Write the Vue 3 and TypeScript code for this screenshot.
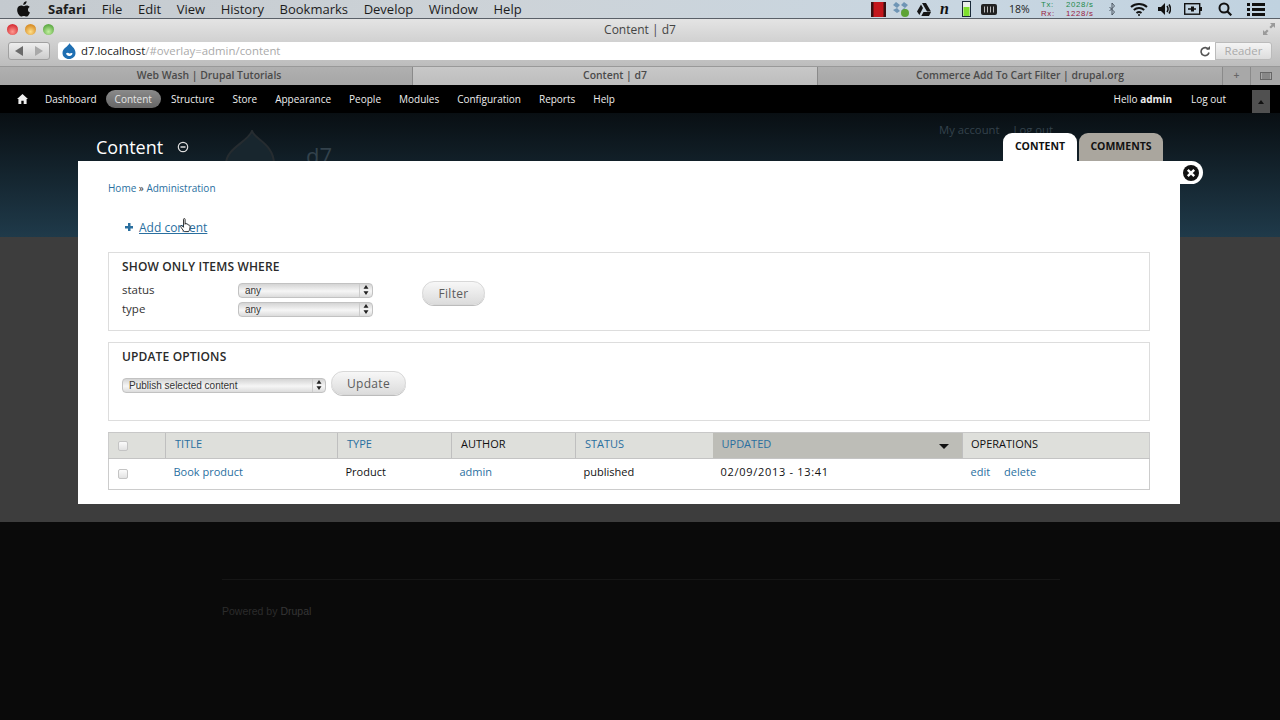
<script setup lang="ts">
const menus: string[] = ['File', 'Edit', 'View', 'History', 'Bookmarks', 'Develop', 'Window', 'Help']
const adminLinks: string[] = ['Structure', 'Store', 'Appearance', 'People', 'Modules', 'Configuration', 'Reports', 'Help']
const tabs: { label: string; active?: boolean }[] = [
  { label: 'Web Wash | Drupal Tutorials' },
  { label: 'Content | d7', active: true },
  { label: 'Commerce Add To Cart Filter | drupal.org' },
]
const columns: { label: string; link?: boolean; sorted?: boolean }[] = [
  { label: 'TITLE', link: true },
  { label: 'TYPE', link: true },
  { label: 'AUTHOR' },
  { label: 'STATUS', link: true },
  { label: 'UPDATED', link: true, sorted: true },
  { label: 'OPERATIONS' },
]
const filters: string[] = ['status', 'type']
</script>

<template>
  <div class="page">
    <header class="menubar">
      <svg class="apple" viewBox="0 0 16 18" width="14" height="16">
        <path fill="#111" d="M11 0c.1 1.200-.4 2.300-1 3-.7.800-1.700 1.400-2.800 1.300C7.100 3.200 7.600 2 8.200 1.300 8.900.6 10.100.1 11 0zM14.800 13c-.4 1-.6 1.400-1.100 2.200-.7 1.100-1.700 2.500-3 2.500-1.100 0-1.400-.7-2.900-.7s-1.900.7-3 .7c-1.300 0-2.200-1.300-2.900-2.300C0 12.600-.3 9 1 7.100c.9-1.300 2.300-2.100 3.600-2.100 1.400 0 2.200.8 3.300.8s1.700-.8 3.300-.8c1.200 0 2.400.6 3.300 1.700-2.900 1.600-2.400 5.700.3 6.300z" />
      </svg>
      <strong class="app-name">Safari</strong>
      <nav class="menus"><span v-for="m in menus" :key="m">{{ m }}</span></nav>
      <div class="status">
        <svg class="st film" viewBox="0 0 15 15" width="15" height="15"><rect width="15" height="15" fill="#c3161c" /><rect width="2.500" height="15" fill="#3a1113" /><rect x="12.500" width="2.500" height="15" fill="#3a1113" /></svg>
        <svg class="st drop" viewBox="0 0 18 16" width="18" height="16"><path fill="#6f95b5" d="M4 1l4 3-3 3-4-3zM12 1l4 3-3 3-4-3zM5 7l3 3-3 2-4-3zM12 7l3 2-3 3-3-2z" /><circle cx="13" cy="12" r="4" fill="#5da335" /></svg>
        <svg class="st drive" viewBox="0 0 14 13" width="14" height="13"><path fill="#151515" d="M5 0h4l5 8.500h-4zM4 1.500l2 3.500-3.600 7L0 8.500zM6.500 9H14l-2 4H4.300z" /></svg>
        <span class="st en">n</span>
        <svg class="st cell" viewBox="0 0 9 16" width="9" height="16"><rect x=".5" y=".5" width="8" height="15" fill="#e8f0e8" stroke="#1a2a3a" /><rect x="1.500" y="6" width="6" height="9" fill="#7ee02f" /></svg>
        <svg class="st mem" viewBox="0 0 16 11" width="16" height="11"><rect width="16" height="11" rx="2" fill="#222" /><path stroke="#bbb" d="M3.500 2.500v6M6.500 2.500v6M9.500 2.500v6M12.500 2.500v6" /></svg>
        <span class="st pct">18%</span>
        <span class="st net-labels"><i class="tx">Tx:</i><i class="rx">Rx:</i></span>
        <span class="st net-values"><i class="tx">2028/s</i><i class="rx">1228/s</i></span>
        <svg class="st blue" viewBox="0 0 12 14" width="12" height="14"><path fill="none" stroke="#4a5560" d="M6 1v12M6 1l2.500 3L3.500 9M6 13l2.500-3L3.500 5" /></svg>
        <svg class="st wifi" viewBox="0 0 18 14" width="18" height="14"><path fill="none" stroke="#111" stroke-width="2" d="M1 5c4.500-4 11.500-4 16 0M3.800 8c3-2.600 7.400-2.600 10.400 0M6.500 11c1.500-1.200 3.500-1.200 5 0" /><circle cx="9" cy="13" r="1" fill="#111" /></svg>
        <svg class="st vol" viewBox="0 0 13 12" width="13" height="12"><path fill="#111" d="M0 4h3l4-4v12L3 8H0z" /><path fill="none" stroke="#111" stroke-width="1.500" d="M9 3c1.400 2 1.400 4 0 6M11 1.500c2 3 2 6 0 9" /></svg>
        <svg class="st plug" viewBox="0 0 18 12" width="18" height="12"><rect x=".7" y=".7" width="15" height="10.500" fill="none" stroke="#111" stroke-width="1.400" /><rect x="16" y="4" width="2" height="4" fill="#111" /><path fill="#111" d="M4 5.300h3V3.500h3v1.800h2v1.400h-2v1.800H7V6.700H4z" /></svg>
        <svg class="st search" viewBox="0 0 14 14" width="14" height="14"><circle cx="6" cy="6" r="4.500" fill="none" stroke="#111" stroke-width="2" /><path stroke="#111" stroke-width="2.200" d="M9 9l4.300 4.300" /></svg>
        <svg class="st list" viewBox="0 0 18 13" width="18" height="13"><path fill="#111" d="M0 0h3v3H0zM5 0h13v3H5zM0 5h3v3H0zM5 5h13v3H5zM0 10h3v3H0zM5 10h13v3H5z" /></svg>
      </div>
    </header>

    <section class="chrome">
      <div class="titlebar">
        <div class="lights"><i class="red"></i><i class="amber"></i><i class="green"></i></div>
        <span class="win-title">Content | d7</span>
        <svg class="fullscreen" viewBox="0 0 12 12" width="12" height="12"><path fill="#9a9a9a" d="M12 0v5l-1.700-1.700L8 5.600 6.400 4l2.300-2.300L7 0zM0 12V7l1.700 1.700L4 6.400 5.600 8 3.300 10.300 5 12z" /></svg>
      </div>
      <div class="addressbar">
        <div class="history">
          <span><svg viewBox="0 0 8 10" width="8" height="10"><path fill="#6a6a6a" d="M8 0v10L0 5z" /></svg></span>
          <span><svg viewBox="0 0 8 10" width="8" height="10"><path fill="#a9a9a9" d="M0 0v10l8-5z" /></svg></span>
        </div>
        <div class="url">
          <svg viewBox="0 0 14 16" width="14" height="16"><path fill="#1f6fb2" d="M7.500 0c.6 2.500 6 4.500 6 10 0 3.500-3 6-6.500 6S.5 13.500.5 10C.5 5 6.500 3.500 7.500 0z" /><path fill="#fff" d="M4 10.500c1.500-1.500 2.500-.2 3.500 0s2-1 3 0c-.5 2-2 2.500-3.500 2.500s-2.500-1-3-2.500z" /></svg>
          <span class="host">d7.localhost</span><span class="path">/#overlay=admin/content</span>
          <svg class="reload" viewBox="0 0 10 11" width="10" height="11"><path fill="none" stroke="#555" stroke-width="1.600" d="M8.500 3.500a4 4 0 1 0 .5 3" /><path fill="#555" d="M6 3.500h4V0z" /></svg>
        </div>
        <span class="reader">Reader</span>
      </div>
      <div class="tabstrip">
        <div v-for="t in tabs" :key="t.label" class="btab" :class="{ active: t.active }">{{ t.label }}</div>
        <div class="btab-add">+</div>
        <div class="btab-side"><svg viewBox="0 0 12 8" width="12" height="8"><rect x=".5" y=".5" width="11" height="7" fill="none" stroke="#666" /><path stroke="#666" d="M3 1v6M5 1v6M7 1v6M9 1v6" /></svg></div>
      </div>
    </section>

    <nav class="toolbar">
      <svg class="home" viewBox="0 0 12 11" width="11" height="10"><path fill="#eee" d="M6 0l6 5.500h-1.500V11H7.300V7.500H4.700V11H1.500V5.500H0z" /></svg>
      <div class="admin-links">
        <a>Dashboard</a>
        <a class="pill">Content</a>
        <a v-for="l in adminLinks" :key="l">{{ l }}</a>
      </div>
      <div class="admin-user">
        <a>Hello <b>admin</b></a>
        <a>Log out</a>
        <span class="toggle"><i></i></span>
      </div>
    </nav>

    <section class="site-head">
      <div class="head-title">
        <h1>Content</h1>
        <svg viewBox="0 0 12 12" width="12" height="12"><circle cx="6" cy="6" r="4.700" fill="none" stroke="#ddd" stroke-width="1.200" /><path stroke="#ddd" stroke-width="1.500" d="M3.500 6h5" /></svg>
      </div>
      <svg class="faint-logo" viewBox="0 0 56 40" width="56" height="40"><path fill="#18262e" stroke="#262c30" stroke-width="2" d="M30 1c2 8 22 13 22 33 0 6-2 6-2 6H6s-2-2-2-6C4 18 26 12 30 1z" /></svg>
      <span class="faint-d7">d7</span>
      <div class="secondary"><span>My account</span><span>Log out</span></div>
    </section>

    <section class="dim"></section>

    <footer class="site-foot">
      <div class="foot-inner">Powered by <span>Drupal</span></div>
    </footer>

    <div class="overlay-tabs">
      <a class="otab on">CONTENT</a>
      <a class="otab">COMMENTS</a>
    </div>
    <div class="close-tab">
      <svg viewBox="0 0 16 16" width="16" height="16"><circle cx="8" cy="8" r="8" fill="#111" /><path stroke="#fff" stroke-width="2.400" d="M4.800 4.800l6.400 6.400M11.200 4.800l-6.400 6.400" /></svg>
    </div>

    <main class="overlay">
      <div class="crumbs"><a>Home</a> » <a>Administration</a></div>
      <div class="add-row">
        <span class="plus"></span>
        <a class="add-link">Add content</a>
        <svg class="hand" viewBox="0 0 12 15" width="12" height="15"><path fill="#fff" stroke="#222" stroke-width=".9" d="M3.500 1.300c0-1 1.600-1 1.600 0v5l.4-1c1 0 1.300.3 1.400 1 .8-.4 1.400 0 1.500.8.900-.3 1.600.2 1.600 1.200 0 2-.3 4-1.500 5.300H4.300C3 12 1.200 10 .7 8.500c-.2-.8.700-1.300 1.300-.7l1.500 1.500z" /></svg>
      </div>

      <section class="panel filter-panel">
        <h2>SHOW ONLY ITEMS WHERE</h2>
        <div class="filter-body">
          <div class="filter-rows">
            <div v-for="f in filters" :key="f" class="filter-row">
              <label>{{ f }}</label>
              <span class="sel sel-any">
                <select><option>any</option></select>
                <svg viewBox="0 0 6 10" width="6" height="10"><path fill="#222" d="M3 0l2.500 3.700h-5zM3 10L.5 6.300h5z" /></svg>
              </span>
            </div>
          </div>
          <button class="btn filter-btn">Filter</button>
        </div>
      </section>

      <section class="panel update-panel">
        <h2>UPDATE OPTIONS</h2>
        <div class="update-body">
          <span class="sel sel-bulk">
            <select><option>Publish selected content</option></select>
            <svg viewBox="0 0 6 10" width="6" height="10"><path fill="#222" d="M3 0l2.500 3.700h-5zM3 10L.5 6.300h5z" /></svg>
          </span>
          <button class="btn update-btn">Update</button>
        </div>
      </section>

      <table class="grid">
        <colgroup>
          <col class="c-check" /><col class="c-title" /><col class="c-type" /><col class="c-author" /><col class="c-status" /><col class="c-updated" /><col />
        </colgroup>
        <thead>
          <tr>
            <th><i class="check"></i></th>
            <th v-for="c in columns" :key="c.label" :class="{ sorted: c.sorted }">
              <a v-if="c.link">{{ c.label }}</a><template v-else>{{ c.label }}</template>
              <i v-if="c.sorted" class="caret"></i>
            </th>
          </tr>
        </thead>
        <tbody>
          <tr>
            <td><i class="check"></i></td>
            <td><a>Book product</a></td>
            <td>Product</td>
            <td><a>admin</a></td>
            <td>published</td>
            <td class="date">02/09/2013 - 13:41</td>
            <td class="ops"><a>edit</a><a>delete</a></td>
          </tr>
        </tbody>
      </table>
    </main>
  </div>
</template>

<style>
html, body { margin: 0; background: #000; }
</style>

<style scoped>
.page {
  position: relative;
  width: 1280px;
  height: 720px;
  overflow: hidden;
  display: flex;
  flex-direction: column;
  font-family: "Open Sans", "DejaVu Sans", sans-serif;
  color: #222;
}
i { font-style: normal; }

.menubar {
  height: 19px;
  flex: none;
  display: flex;
  align-items: center;
  background: linear-gradient(90deg, #c4cacf 0%, #cdd3d8 40%, #c8d6e1 75%, #c0d2e0 100%);
  border-bottom: 1px solid #5a6068;
  box-sizing: border-box;
  font-size: 13px;
  color: #1c1c1c;
  position: relative;
}
.apple { margin-left: 17px; width: 14px; }
.app-name { margin-left: 17px; font-weight: 700; font-size: 13px; }
.menus { display: flex; gap: 15.600px; margin-left: 16px; }
.status {
  position: absolute;
  left: 871px;
  top: 0;
  height: 18px;
  width: 395px;
  display: flex;
  align-items: center;
}
.st { flex: none; }
.drop { margin-left: 6px; }
.drive { margin-left: 7px; }
.en { margin-left: 9px; width: 11px; font: italic 700 16px/16px "Liberation Serif", serif; color: #111; }
.cell { margin-left: 11px; }
.mem { margin-left: 10px; }
.pct { margin-left: 12px; font-size: 10.500px; width: 21px; }
.net-labels, .net-values { display: flex; flex-direction: column; font: 7.800px/9px "Liberation Sans", sans-serif; letter-spacing: .7px; }
.net-labels { margin-left: 11px; width: 14px; }
.net-values { margin-left: 11px; width: 30px; }
.tx { color: #238a4a; }
.rx { color: #9a2040; }
.blue { margin-left: 10px; }
.wifi { margin-left: 12px; }
.vol { margin-left: 10px; }
.plug { margin-left: 13px; }
.search { margin-left: 16px; }
.list { margin-left: 15px; }

.chrome { flex: none; background: linear-gradient(#e4e4e4, #bdbdbd 70%); }
.titlebar { height: 22px; position: relative; display: flex; align-items: center; justify-content: center; font-size: 12px; color: #444; padding-bottom: 2px; box-sizing: border-box; }
.lights { position: absolute; left: 7px; top: 5px; display: flex; gap: 7px; }
.lights i { width: 11px; height: 11px; border-radius: 50%; }
.red { background: radial-gradient(circle at 50% 70%, #ff9a90, #d8343a 70%); }
.amber { background: radial-gradient(circle at 50% 70%, #ffe08a, #d9902a 70%); }
.green { background: radial-gradient(circle at 50% 70%, #c4f0a0, #62ad48 70%); }
.fullscreen { position: absolute; left: 1263px; top: 4px; }
.addressbar { height: 25px; display: flex; align-items: flex-start; padding-left: 8px; box-sizing: border-box; padding-top: 1px; }
.history { display: flex; width: 42px; height: 18px; border: 1px solid #a0a0a0; border-radius: 3px; box-sizing: border-box; background: linear-gradient(#eee, #ccc); }
.history span { flex: 1; display: flex; align-items: center; justify-content: center; }
.url {
  margin-left: 8px;
  width: 1157px;
  height: 18px;
  box-sizing: border-box;
  background: #fff;
  border-radius: 3px 0 0 3px;
  display: flex;
  align-items: center;
  padding: 0 0 1px 4px;
  font-size: 11.400px;
  position: relative;
}
.host { margin-left: 5px; color: #222; }
.path { color: #aaa; }
.reload { position: absolute; left: 1142px; top: 4px; }
.reader { width: 57px; height: 18px; text-align: center; line-height: 16px; font-size: 11.400px; color: #aaa; background: linear-gradient(#f4f4f4, #ddd); border: 1px solid #bbb; box-sizing: border-box; border-radius: 0 3px 3px 0; }
.tabstrip { height: 19px; display: flex; background: #a8a8a8; font-size: 10.400px; font-weight: 600; color: #4a4a4a; border-top: 1px solid #999; box-sizing: border-box; }
.btab { width: 405px; text-align: center; line-height: 16px; background: linear-gradient(#b0b0b0, #a6a6a6); border-right: 1px solid #8a8a8a; box-sizing: border-box; }
.btab:first-child { width: 413px; padding-left: 6px; }
.btab.active { background: linear-gradient(#c8c8c8, #bdbdbd); }
.btab-add { width: 28px; text-align: center; line-height: 16px; color: #666; border-right: 1px solid #8a8a8a; box-sizing: border-box; }
.btab-side { flex: 1; display: flex; align-items: center; justify-content: center; }

.toolbar { height: 28px; flex: none; box-sizing: border-box; padding-bottom: 1px; background: #000; display: flex; align-items: center; color: #eee; font-size: 10px; position: relative; }
.home { margin-left: 17px; }
.admin-links { display: flex; align-items: center; gap: 18px; margin-left: 17px; }
.pill { background: linear-gradient(#8a8a8a, #666); border-radius: 9px; padding: 2px 9px; margin: 0 -8px 0 -9px; line-height: 14px; color: #e6e6e6; }
.admin-user { margin-left: auto; display: flex; align-items: center; gap: 19px; margin-right: 10px; }
.toggle { width: 18px; height: 23px; margin-left: 7px; margin-top: 6px; background: #505050; display: flex; align-items: center; justify-content: center; }
.toggle i { border: 3px solid transparent; border-top: 0; border-bottom: 4px solid #111; }

.site-head { height: 124px; flex: none; background: linear-gradient(#090f13, #1f3a4a); position: relative; }
.head-title { position: absolute; left: 96px; top: 21px; display: flex; align-items: center; gap: 14px; }
h1 { margin: 0; font-size: 18px; line-height: 26px; font-weight: 400; color: #fff; }
.faint-logo { position: absolute; left: 222px; top: 17px; }
.faint-d7 { position: absolute; left: 306px; top: 27px; font-size: 22px; line-height: 30px; color: #33424c; }
.secondary { position: absolute; left: 939px; top: 9px; display: flex; gap: 14px; font-size: 11.300px; color: #34424c; }
.dim { height: 285px; flex: none; background: #3d3d3d; }
.site-foot { flex: 1; background: #0a0a0a; }
.foot-inner { margin: 57px 0 0 222px; width: 838px; border-top: 1px solid #161616; padding-top: 25px; font: 10.500px "Liberation Sans", sans-serif; color: #2c2c2c; }
.foot-inner span { color: #363636; }

.overlay-tabs { position: absolute; left: 1003px; top: 133px; display: flex; gap: 2px; }
.otab { height: 28px; box-sizing: border-box; padding-top: 6px; text-align: center; font-size: 10.500px; font-weight: 700; color: #111; background: #aaa69e; border-radius: 9px 9px 0 0; width: 84px; }
.otab.on { background: #fff; width: 74px; }
.close-tab { position: absolute; left: 1170px; top: 161px; width: 33px; height: 23px; background: #fff; border-radius: 0 12px 12px 0; display: flex; align-items: center; justify-content: flex-end; padding-right: 4px; box-sizing: border-box; }

.overlay {
  position: absolute;
  left: 78px;
  top: 161px;
  width: 1102px;
  height: 343px;
  box-sizing: border-box;
  background: #fff;
  padding: 20px 30px 0;
  font-size: 11px;
}
.overlay a { color: #2a6f9f; }
.crumbs { font-size: 10px; line-height: 14px; color: #333; }
.add-row { position: relative; display: flex; align-items: center; margin: 22px 0 0 17px; height: 20px; font-size: 12px; }
.plus { position: relative; width: 8px; height: 8px; margin-right: 6px; background: linear-gradient(#2a6f9f, #2a6f9f) center/8px 2.500px no-repeat, linear-gradient(#2a6f9f, #2a6f9f) center/2.500px 8px no-repeat; }
.add-link { text-decoration: underline; }
.hand { position: absolute; left: 55px; top: 1px; }
.panel { border: 1px solid #ddd; box-sizing: border-box; height: 79px; margin-top: 15px; padding: 6px 13px 0; }
.update-panel { margin-top: 11px; }
h2 { margin: 0; font-size: 12px; line-height: 15px; font-weight: 600; color: #2a2a2a; letter-spacing: .15px; }
.filter-body { display: flex; margin-top: 9px; }
.filter-rows { width: 300px; display: flex; flex-direction: column; gap: 4px; }
.filter-row { display: flex; align-items: center; height: 15px; }
.filter-row label { width: 116px; margin-bottom: 3px; font-size: 11.500px; color: #333; }
.sel { position: relative; display: block; height: 15px; box-sizing: border-box; }
.sel select {
  appearance: none;
  display: block;
  width: 100%;
  height: 15px;
  box-sizing: border-box;
  margin: 0;
  padding: 0 0 0 6px;
  border: 1px solid #c2c2c2;
  border-radius: 4px;
  background: linear-gradient(#d4d4d4, #f6f6f6 55%, #dcdcdc);
  font: 10px "Liberation Sans", sans-serif;
  color: #333;
  line-height: 13px;
}
.sel svg { position: absolute; right: 4px; top: 2px; pointer-events: none; }
.sel::after { content: ""; position: absolute; right: 13px; top: 1px; bottom: 1px; width: 1px; background: #ccc; }
.sel-any { width: 135px; }
.sel-bulk { width: 204px; margin-top: 3px; }
.btn {
  height: 24px;
  border: 1px solid #d8d8d8;
  border-radius: 12px;
  background: linear-gradient(#f7f7f7, #dcdcdc);
  font: 12px "Open Sans", sans-serif;
  color: #5b5b5b;
  padding: 0;
  letter-spacing: .3px;
  box-shadow: 0 1px 0 #bbb;
}
.filter-btn { width: 63px; margin-top: -2px; }
.update-btn { width: 75px; margin-bottom: 2px; }
.update-body { display: flex; align-items: center; gap: 5px; margin-top: 8px; height: 24px; }
.grid { margin-top: 11px; width: 1042px; border-collapse: collapse; table-layout: fixed; font-size: 11px; }
.c-check { width: 57px; }
.c-title { width: 172px; }
.c-type { width: 114px; }
.c-author { width: 124px; }
.c-status { width: 137px; }
.c-updated { width: 250px; }
th { height: 26px; padding: 0 0 4px 9px; background: #dedfdb; border-bottom: 1px solid #c4c4c4; border-top: 1px solid #c8c8c8; border-left: 1px solid #bfbfbf; text-align: left; font-weight: 400; color: #111; box-sizing: border-box; position: relative; }
th:first-child { border-left: 1px solid #ccc; padding-bottom: 0; }
th.sorted { background: #bdbdb7; border-left: 0; }
td { height: 31px; padding: 0 0 5px 8px; border-bottom: 1px solid #ccc; color: #111; box-sizing: border-box; }
td:first-child { border-left: 1px solid #ccc; padding: 0 0 1px 9px; }
td:last-child { border-right: 1px solid #ccc; padding-left: 8px; }
th:last-child { border-right: 1px solid #ccc; padding-left: 8px; }
.date { letter-spacing: .7px; }
.ops a + a { margin-left: 14px; }
.caret { position: absolute; right: 13px; top: 11px; border: 5px solid transparent; border-top: 5px solid #111; border-bottom: 0; }
.check { display: block; width: 10px; height: 10px; border: 1px solid #c4c4c4; border-radius: 2px; background: linear-gradient(#fbfbfb, #e2e2e2); box-sizing: border-box; }
</style>
